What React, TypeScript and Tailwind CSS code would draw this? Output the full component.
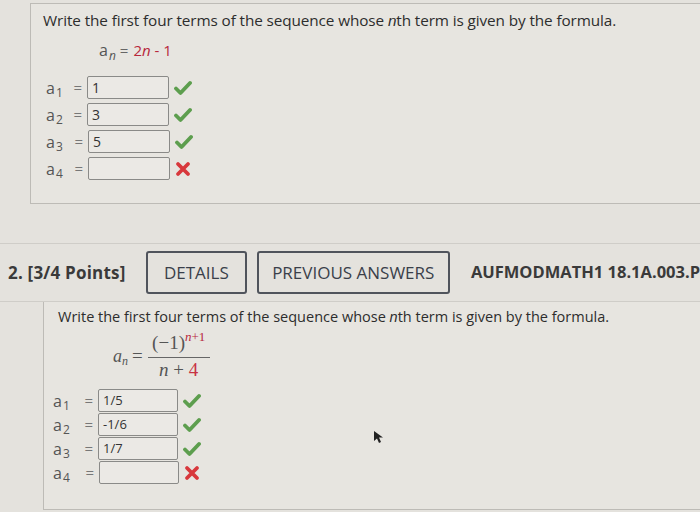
import React from "react";

const Check = () => (
  <svg width="18" height="16" viewBox="0 0 18 16" className="shrink-0">
    <path d="M2 8.5 L6.5 13 L16 3" fill="none" stroke="#5d9e4e" strokeWidth="3.8" strokeLinecap="round" strokeLinejoin="round" />
  </svg>
);

const Cross = () => (
  <svg width="16" height="16" viewBox="0 0 16 16" className="shrink-0">
    <path d="M3 3 L13 13 M13 3 L3 13" fill="none" stroke="#d8383c" strokeWidth="3.8" strokeLinecap="round" />
  </svg>
);

type RowProps = { sub: string; value: string; ok: boolean; labelW: string; inputW: string; size: string };

function Row({ sub, value, ok, labelW, inputW, size }: RowProps) {
  return (
    <div className="flex items-center">
      <div className={`flex items-center ${labelW}`}>
        <span className="text-[#555] text-[16px] leading-none">a</span>
        <span className="text-[#555] text-[12px] leading-none relative top-[5px] ml-[1px]">{sub}</span>
        <span className="text-[#777] text-[15px] leading-none ml-auto mr-[5px]">=</span>
      </div>
      <div className={`h-[23px] ${inputW} border border-[#8a8a88] rounded-[2px] bg-[#ebe9e5] flex items-center px-[4px] ${size} text-[#333]`}>
        {value}
      </div>
      <div className="ml-[5px] flex items-center">{ok ? <Check /> : <Cross />}</div>
    </div>
  );
}

export default function App() {
  const font = { fontFamily: '"Open Sans", "Liberation Sans", sans-serif' };
  return (
    <div className="w-[700px] h-[512px] overflow-hidden bg-[#e4e2dd] relative" style={font}>
      {/* Top panel */}
      <div className="ml-[30px] mt-[3px] h-[201px] border-t border-l border-b border-[#bdbbb6] bg-[#e7e5e0] pl-[12px] pt-[6px]">
        <div className="text-[15.3px] text-[#2d2d2d] leading-[20px] tracking-[-0.1px]">
          Write the first four terms of the sequence whose <i style={{ fontFamily: '"Liberation Sans", sans-serif' }}>n</i>th term is given by the formula.
        </div>
        <div className="ml-[56px] mt-[11px] flex items-center text-[15px] leading-none">
          <span className="text-[#555] text-[16px]">a</span>
          <span className="text-[#555] text-[12px] italic relative top-[6px] ml-[1px]">n</span>
          <span className="text-[#666] ml-[4px]">=</span>
          <span className="text-[#b8283c] ml-[5px]">2<i>n</i> - 1</span>
        </div>
        <div className="mt-[18px] ml-[3px] flex flex-col gap-[4px]">
          <Row sub="1" value="1" ok labelW="w-[41px]" inputW="w-[82px]" size="text-[14px]" />
          <Row sub="2" value="3" ok labelW="w-[41px]" inputW="w-[82px]" size="text-[14px]" />
          <Row sub="3" value="5" ok labelW="w-[42px]" inputW="w-[82px]" size="text-[14px]" />
          <Row sub="4" value="" ok={false} labelW="w-[42px]" inputW="w-[82px]" size="text-[14px]" />
        </div>
      </div>

      {/* Header row */}
      <div className="mt-[39px] border-t border-[#cfcdc8] h-[58px] flex items-center">
        <div className="ml-[8px] w-[140px] text-[17px] font-bold text-[#3a3a3a] tracking-[0.2px]">2. [3/4 Points]</div>
        <div className="h-[43px] w-[102px] border-2 border-[#50545c] rounded-[3px] flex items-center justify-center text-[17px] text-[#3a3f4a] font-medium">
          DETAILS
        </div>
        <div className="ml-[10px] h-[43px] w-[196px] border-2 border-[#50545c] rounded-[3px] flex items-center justify-center text-[17px] text-[#3a3f4a] font-medium">
          PREVIOUS ANSWERS
        </div>
        <div className="ml-[21px] text-[16.5px] font-bold text-[#3a3a3a] whitespace-nowrap">AUFMODMATH1 18.1A.003.P</div>
      </div>

      {/* Second panel */}
      <div className="border-t border-[#cfcdc8]">
        <div className="ml-[43px] h-[208px] border-l border-b border-[#bdbbb6] bg-[#e7e5e0] pl-[14px] pt-[5px]">
          <div className="text-[14.5px] text-[#2d2d2d] leading-[19px]">
            Write the first four terms of the sequence whose <i style={{ fontFamily: '"Liberation Sans", sans-serif' }}>n</i>th term is given by the formula.
          </div>
          <div className="ml-[55px] mt-[4px] flex items-center text-[#555]" style={{ fontFamily: '"Liberation Serif", serif' }}>
            <span className="italic text-[18px]">a</span>
            <span className="italic text-[12px] relative top-[4px]">n</span>
            <span className="text-[19px] ml-[4px] mr-[5px]">=</span>
            <div className="flex flex-col items-center">
              <div className="text-[19px] leading-[24px] px-[1px] whitespace-nowrap">
                (−1)<span className="text-[13px] italic text-[#b8283c] relative top-[-8px]">n<span className="not-italic">+1</span></span>
              </div>
              <div className="h-[1px] w-[62px] bg-[#666]" />
              <div className="text-[19px] leading-[24px]">
                <i>n</i> + <span className="text-[#c83244]">4</span>
              </div>
            </div>
          </div>
          <div className="mt-[7px] ml-[-5px] flex flex-col gap-[1px]">
            <Row sub="1" value="1/5" ok labelW="w-[45px]" inputW="w-[80px]" size="text-[13px]" />
            <Row sub="2" value="-1/6" ok labelW="w-[45px]" inputW="w-[80px]" size="text-[13px]" />
            <Row sub="3" value="1/7" ok labelW="w-[45px]" inputW="w-[80px]" size="text-[13px]" />
            <Row sub="4" value="" ok={false} labelW="w-[46px]" inputW="w-[80px]" size="text-[13px]" />
          </div>
        </div>
      </div>

      {/* cursor */}
      <svg className="absolute left-[373px] top-[430px]" width="12" height="14" viewBox="0 0 12 14">
        <path d="M1 1 L1 11 L4 8.5 L6 13 L8 12 L6 7.5 L10 7.5 Z" fill="#222" />
      </svg>
    </div>
  );
}
